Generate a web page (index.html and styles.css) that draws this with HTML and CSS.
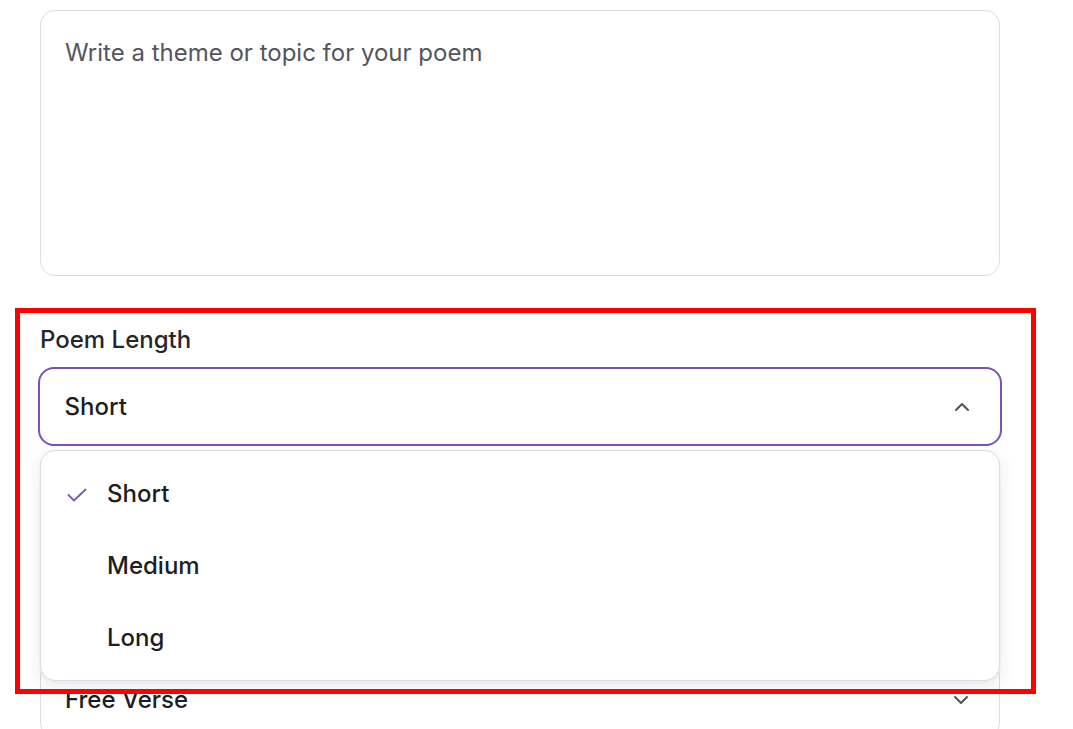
FILE: index.html
```html
<!DOCTYPE html>
<html lang="en">
<head>
<meta charset="utf-8">
<title>Poem Generator</title>
<link rel="stylesheet" href="styles.css">
</head>
<body>
<div class="page">
  <div class="field">
    <textarea class="topic" placeholder="Write a theme or topic for your poem"></textarea>
  </div>

  <div class="field length">
    <label class="label">Poem Length</label>
    <div class="select-wrap">
      <div class="select open">
        <span class="value">Short</span>
        <svg class="chev" width="16" height="10" viewBox="0 0 16 10"><path d="M2 8 L8 2 L14 8" fill="none" stroke="#555" stroke-width="2" stroke-linecap="round" stroke-linejoin="round"/></svg>
      </div>
      <ul class="menu">
        <li class="item selected">
          <svg class="check" width="20" height="14" viewBox="0 0 20 14"><path d="M1.5 7 L7 12.5 L18.5 1.5" fill="none" stroke="#7c55b8" stroke-width="1.8" stroke-linecap="round" stroke-linejoin="round"/></svg>
          <span>Short</span>
        </li>
        <li class="item"><span>Medium</span></li>
        <li class="item"><span>Long</span></li>
      </ul>
    </div>
  </div>

  <div class="field style">
    <div class="select">
      <span class="value">Free Verse</span>
      <svg class="chev" width="16" height="10" viewBox="0 0 16 10"><path d="M2 2 L8 8 L14 2" fill="none" stroke="#555" stroke-width="2" stroke-linecap="round" stroke-linejoin="round"/></svg>
    </div>
  </div>

  <div class="annotation"></div>
</div>
</body>
</html>
```

FILE: styles.css
```css
* { box-sizing: border-box; }

html, body {
  margin: 0;
  padding: 0;
  background: #ffffff;
  overflow: hidden;
}

body {
  font-family: Inter, "Noto Sans", "Liberation Sans", sans-serif;
  color: #1d1d22;
  font-size: 24px;
  line-height: 1.5;
}

.page {
  position: relative;
  width: 1073px;
  height: 729px;
  padding: 10px 0 0 40px;
}

.field {
  width: 960px;
  display: flex;
  flex-direction: column;
}

.topic {
  display: block;
  width: 960px;
  height: 266px;
  border: 1px solid #dcdae4;
  border-radius: 15px;
  padding: 24px 24px;
  font-family: inherit;
  font-size: 24px;
  line-height: 1.5;
  color: #1d1d22;
  resize: none;
  outline: none;
  background: #fff;
}

.topic::placeholder {
  color: #55555c;
  opacity: 1;
}

.length {
  margin-top: 46px;
}

.label {
  font-weight: 500;
  color: #26262b;
  margin-bottom: 9px;
}

.select-wrap {
  position: relative;
}

.select {
  height: 79px;
  border: 1px solid #dcdae4;
  border-radius: 16px;
  padding: 0 30px 0 24px;
  display: flex;
  align-items: center;
  justify-content: space-between;
  background: #fff;
  font-weight: 500;
}

.select.open {
  margin: 0 -2px;
  border: 2.5px solid #7b52b4;
  padding-left: 24.5px;
}

.menu {
  position: absolute;
  top: 83px;
  left: 0;
  right: 0;
  z-index: 2;
  margin: 0;
  padding: 7px 0 6px;
  list-style: none;
  background: #fff;
  border: 1px solid #dddbe6;
  border-radius: 15px;
  box-shadow: 0 6px 18px rgba(40, 30, 70, 0.09), 0 2px 4px rgba(40, 30, 70, 0.04);
}

.item {
  height: 72px;
  display: flex;
  align-items: center;
  padding-left: 66px;
  font-weight: 500;
  position: relative;
}

.check {
  position: absolute;
  left: 26px;
  top: 30px;
}

.style {
  margin-top: 214px;
}

.annotation {
  position: absolute;
  left: 15px;
  top: 308px;
  width: 1021px;
  height: 386px;
  border: 5px solid #ff0000;
  z-index: 5;
  pointer-events: none;
}
```
